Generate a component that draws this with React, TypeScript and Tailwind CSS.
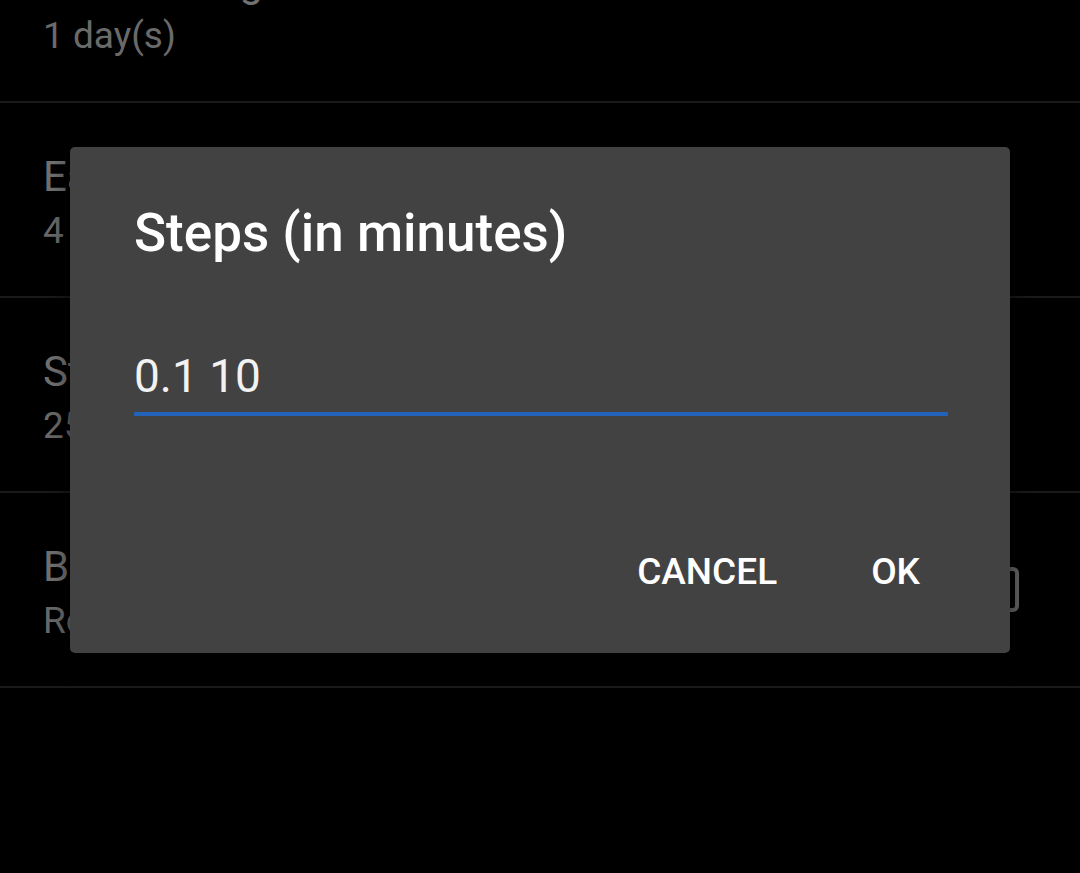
import React from "react";

type Row = { title: string; sub: string; checkbox?: boolean };

const rows: Row[] = [
  { title: "Forecasting", sub: "1 day(s)" },
  { title: "Earliest notification", sub: "4 hour(s) before" },
  { title: "Steps (in minutes)", sub: "25 minutes" },
  { title: "Battery optimisation", sub: "Recommended", checkbox: true },
];

export default function App() {
  return (
    <div
      className="relative w-[1080px] h-[873px] overflow-hidden bg-black"
      style={{ fontFamily: "Roboto, 'Noto Sans', Arial, sans-serif" }}
    >
      <div className="-mt-[92px] flex flex-col">
        {rows.map((r, i) => (
          <div
            key={i}
            className="h-[195px] border-b-2 border-[#1a1a1a] pl-[43px] pr-[61px] flex items-start"
          >
            <div className="flex-1 pt-[48px] min-w-0">
              <div className="text-[42px] leading-[52px] text-[#717171] whitespace-nowrap">
                {r.title}
              </div>
              <div className="text-[37px] leading-[56px] text-[#6a6a6a] whitespace-nowrap">
                {r.sub}
              </div>
            </div>
            {r.checkbox && (
              <div className="self-center w-[45px] h-[45px] rounded-[6px] border-[4px] border-[#666666]" />
            )}
          </div>
        ))}
      </div>

      <div className="absolute left-[70px] top-[147px] w-[940px] h-[506px] rounded-[5px] bg-[#424242] shadow-[0_8px_24px_rgba(0,0,0,0.6)] flex flex-col pl-[64px] pr-[62px] pt-[56px]">
        <div className="text-[53px] leading-[60px] font-medium text-white whitespace-nowrap">
          Steps (in minutes)
        </div>
        <div className="mt-[85px] text-[46px] leading-[56px] text-[#f2f2f2]">0.1 10</div>
        <div className="mt-[8px] h-[4px] bg-[#2262b8]" />
        <div className="mt-[134px] flex justify-end pr-[28px]">
          <div className="text-[37px] leading-[44px] font-medium text-white">CANCEL</div>
          <div className="ml-[94px] text-[37px] leading-[44px] font-medium text-white">OK</div>
        </div>
      </div>
    </div>
  );
}
